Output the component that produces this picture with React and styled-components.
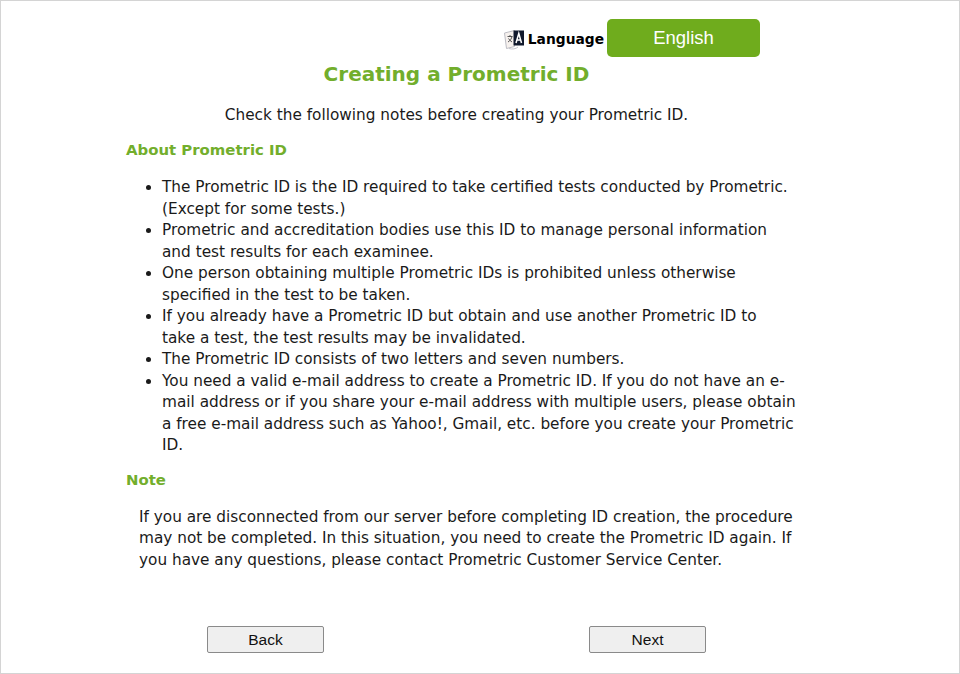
import React from 'react'
import styled, { createGlobalStyle } from 'styled-components'

const GlobalStyle = createGlobalStyle`
  html, body {
    margin: 0;
    padding: 0;
    background: #fff;
  }
  body {
    font-family: "DejaVu Sans", sans-serif;
    color: #1a1a1a;
  }
`

const Frame = styled.div`
  box-sizing: border-box;
  width: 960px;
  height: 674px;
  border: 1px solid #d4d4d4;
  padding: 18px 161px 0 125px;
`

const LanguageBar = styled.div`
  display: flex;
  justify-content: flex-end;
  align-items: center;
  gap: 3px;
  height: 38px;
  margin-right: 38px;
`

const LanguageLabel = styled.span`
  display: flex;
  align-items: center;
  gap: 3px;
  padding-top: 2px;
  font-size: 13.8px;
  font-weight: 700;
  color: #000;
`

const LanguageButton = styled.button`
  width: 153px;
  height: 38px;
  border: none;
  border-radius: 5px;
  background: #6fac1d;
  color: #fff;
  font-family: "Liberation Sans", Arial, sans-serif;
  font-size: 18.5px;
`

const Title = styled.h1`
  margin: 4px 11px 0 0;
  font-size: 20px;
  line-height: 26px;
  font-weight: 700;
  color: #72ae2c;
  text-align: center;
`

const Lead = styled.p`
  margin: 17px 11px 0 0;
  font-size: 15.3px;
  line-height: 22px;
  text-align: center;
`

const SectionHeading = styled.h2`
  margin: ${({ $top }) => $top}px 0 0;
  font-size: 14.9px;
  line-height: 22px;
  font-weight: 700;
  color: #72ae2c;
`

const Notes = styled.ul`
  margin: 16px 0 0;
  padding: 0 0 0 36px;
  font-size: 15.3px;
  line-height: 21.5px;
`

const NoteText = styled.p`
  margin: 16px 0 0;
  padding-left: 13px;
  font-size: 15.3px;
  line-height: 21.5px;
`

const ActionRow = styled.div`
  display: flex;
  justify-content: space-between;
  margin: 55px 92px 0 81px;
`

const ActionButton = styled.button`
  width: 117px;
  height: 27px;
  box-sizing: border-box;
  border: 1px solid #8a8a8a;
  border-radius: 2px;
  background: #efefef;
  color: #111;
  font-family: "Liberation Sans", Arial, sans-serif;
  font-size: 15.5px;
`

const TranslateIcon = () => (
  <svg width="22" height="22" viewBox="0 0 22 22" fill="none">
    <path d="M1.5 5l10-2.5v16l-8 2z" fill="#f6f1ee" stroke="#bdbdc4" strokeWidth="1" />
    <path d="M4.5 8.5h5M7 7v1.5M5 14c2.5-1.5 3.5-3.5 4-5.5M5.5 10.5c1 1.5 2 2.5 3.5 3.5" stroke="#444" strokeWidth="0.9" />
    <rect x="10.5" y="2.5" width="10.5" height="15" fill="#10182c" />
    <path d="M13 15l2.8-9.5 2.7 9.5M14 12h3.6" stroke="#fff" strokeWidth="1.5" />
    <path d="M6 20.5c3 1 7 0.5 9-1.5" stroke="#c4c4cc" strokeWidth="1" />
  </svg>
)

const notes = [
  'The Prometric ID is the ID required to take certified tests conducted by Prometric. (Except for some tests.)',
  'Prometric and accreditation bodies use this ID to manage personal information and test results for each examinee.',
  'One person obtaining multiple Prometric IDs is prohibited unless otherwise specified in the test to be taken.',
  'If you already have a Prometric ID but obtain and use another Prometric ID to take\u00a0a test, the test results may be invalidated.',
  'The Prometric ID consists of two letters and seven numbers.',
  'You need a valid e-mail address to create a Prometric ID. If you do not have an e-mail address or if you share your e-mail address with multiple users, please obtain a free e-mail address such as Yahoo!, Gmail, etc. before you create your Prometric ID.',
]

const App = () => (
  <>
    <GlobalStyle />
    <Frame>
      <LanguageBar>
        <LanguageLabel>
          <TranslateIcon />
          Language
        </LanguageLabel>
        <LanguageButton>English</LanguageButton>
      </LanguageBar>
      <Title>Creating a Prometric ID</Title>
      <Lead>Check the following notes before creating your Prometric ID.</Lead>
      <SectionHeading $top={13}>About Prometric ID</SectionHeading>
      <Notes>
        {notes.map(note => (
          <li key={note}>{note}</li>
        ))}
      </Notes>
      <SectionHeading $top={12}>Note</SectionHeading>
      <NoteText>
        If you are disconnected from our server before completing ID creation, the procedure may not be completed. In this situation, you need to create the Prometric ID again. If you have any questions, please contact Prometric Customer Service Center.
      </NoteText>
      <ActionRow>
        <ActionButton>Back</ActionButton>
        <ActionButton>Next</ActionButton>
      </ActionRow>
    </Frame>
  </>
)

export default App
